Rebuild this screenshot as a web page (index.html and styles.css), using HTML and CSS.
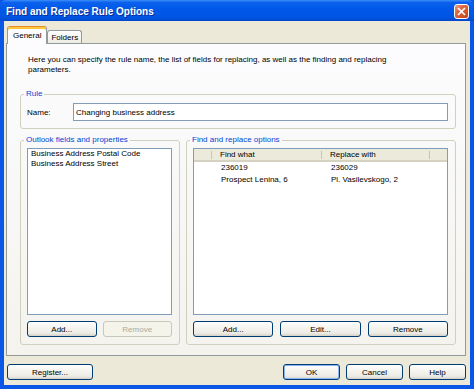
FILE: index.html
```html
<!DOCTYPE html>
<html lang="en">
<head>
  <meta charset="UTF-8" />
  <title>Find and Replace Rule Options</title>
  <link rel="stylesheet" href="styles.css">
</head>
<body>
  <div class="window">
    <div class="titlebar">
      <span class="title">Find and Replace Rule Options</span>
      <button class="close-btn" title="Close">
        <svg width="9" height="9" viewBox="0 0 9 9"><path d="M1 1L8 8M8 1L1 8" stroke="#fff" stroke-width="1.7"/></svg>
      </button>
    </div>

    <div class="frame">
      <div class="tabs">
        <div class="tab active">General</div>
        <div class="tab">Folders</div>
      </div>

      <div class="panel">
        <p class="intro">Here you can specify the rule name, the list of fields for replacing, as well as the finding and replacing parameters.</p>

        <fieldset class="group rule">
          <legend>Rule</legend>
          <div class="field-row">
            <label for="ruleName">Name:</label>
            <input id="ruleName" value="Changing business address">
          </div>
        </fieldset>

        <div class="columns">
          <fieldset class="group fields">
            <legend>Outlook fields and properties</legend>
            <div class="listbox">
              <div class="item">Business Address Postal Code</div>
              <div class="item">Business Address Street</div>
            </div>
            <div class="btn-row">
              <button class="btn">Add...</button>
              <button class="btn" disabled>Remove</button>
            </div>
          </fieldset>

          <fieldset class="group replace">
            <legend>Find and replace options</legend>
            <div class="listview">
              <div class="lv-head">
                <span></span><span>Find what</span><span>Replace with</span><span></span>
              </div>
              <div class="lv-row">
                <span></span><span>236019</span><span>236029</span><span></span>
              </div>
              <div class="lv-row">
                <span></span><span>Prospect Lenina, 6</span><span>Pl. Vasilevskogo, 2</span><span></span>
              </div>
            </div>
            <div class="btn-row wide">
              <button class="btn">Add...</button>
              <button class="btn">Edit...</button>
              <button class="btn">Remove</button>
            </div>
          </fieldset>
        </div>
      </div>

      <div class="dialog-buttons">
        <button class="btn register">Register...</button>
        <div class="right">
          <button class="btn default">OK</button>
          <button class="btn">Cancel</button>
          <button class="btn">Help</button>
        </div>
      </div>
    </div>
  </div>
</body>
</html>
```

FILE: styles.css
```css
* {
  box-sizing: border-box;
}

body {
  margin: 0;
  font-family: 'Liberation Sans', Arial, sans-serif;
  font-size: 8px;
  color: #000;
  background: #fff;
}

.window {
  width: 474px;
  height: 389px;
  background: #0a56e6;
  display: flex;
  flex-direction: column;
}

.titlebar {
  height: 21px;
  display: flex;
  align-items: center;
  justify-content: space-between;
  padding: 2px 5px 0 6px;
  background: linear-gradient(#3b8df8 0, #0b61ec 12%, #0058e8 45%, #0055e3 80%, #0047cc 100%);
  border-radius: 6px 6px 0 0;
}

.title {
  color: #fff;
  font-size: 10px;
  font-weight: bold;
  line-height: 12px;
  text-shadow: 1px 1px #0a2b9c;
}

.close-btn {
  width: 15px;
  height: 15px;
  padding: 0;
  border: 1px solid #fff;
  border-radius: 3px;
  background: linear-gradient(135deg, #f0a080 0, #e06a42 35%, #c94018 100%);
  display: flex;
  align-items: center;
  justify-content: center;
}

.frame {
  height: 364px;
  margin: 0 4px 4px;
  background: #ece9d8;
  display: flex;
  flex-direction: column;
}

/* tabs */
.tabs {
  height: 22px;
  display: flex;
  align-items: flex-end;
  padding-left: 3px;
}

.tab {
  height: 13px;
  padding: 1px 3px 0;
  line-height: 11px;
  border: 1px solid #919b9c;
  border-bottom: none;
  border-radius: 3px 3px 0 0;
  background: linear-gradient(#fff, #ecebe5);
}

.tab.active {
  position: relative;
  z-index: 1;
  height: 18px;
  margin-bottom: -1px;
  padding: 3px 5px 0;
  line-height: 12px;
  border-top-color: #e68b2c;
  box-shadow: inset 0 2px #ffc73c;
  background: #fcfcfe;
}

.panel {
  width: 460px;
  margin-left: 2px;
  padding: 0 9px 10px 13px;
  border: 1px solid #919b9c;
  background: linear-gradient(#fcfcfe, #f4f3ee);
}

.intro {
  max-width: 390px;
  margin: 11px 0 0 8px;
  line-height: 10px;
}

/* group boxes */
.group {
  margin: 0;
  min-width: 0;
  padding: 3px 7px 7px 6px;
  border: 1px solid #d0d0bf;
  border-radius: 3px;
}

.group legend {
  margin-left: -3px;
  padding: 0 2px;
  line-height: 10px;
  color: #0046d5;
}

.rule {
  margin-top: 14px;
  padding-top: 4px;
}

.field-row {
  display: flex;
  align-items: center;
}

.field-row label {
  width: 46px;
}

.field-row input {
  flex: 1;
  height: 18px;
  padding: 0 2px;
  border: 1px solid #7f9db9;
  font: inherit;
  background: #fff;
}

.columns {
  display: flex;
  gap: 6px;
  margin-top: 6px;
}

.fields {
  width: 160px;
}

.replace {
  flex: 1;
}

.listbox,
.listview {
  height: 167px;
  border: 1px solid #7f9db9;
  background: #fff;
}

.listbox {
  padding: 0 3px;
  line-height: 10px;
}

.lv-head,
.lv-row {
  display: grid;
  grid-template-columns: 18px 110px 108px 1fr;
}

.lv-head {
  height: 13px;
  padding-top: 1px;
  line-height: 10px;
  background: #ebeadb;
  border-bottom: 2px solid #d6d2c2;
}

.lv-head span {
  padding-left: 8px;
  background: linear-gradient(#c7c5b2, #c7c5b2) right 1px / 1px 8px no-repeat;
}

.lv-head span:last-child {
  background: none;
}

.lv-row {
  line-height: 12px;
}

.lv-row span {
  padding-left: 9px;
}

/* buttons */
.btn-row {
  display: flex;
  gap: 6px;
  margin-top: 6px;
}

.btn-row.wide {
  gap: 7px;
}

.btn-row .btn {
  flex: 1;
}

.btn {
  height: 16px;
  padding: 0;
  font: inherit;
  color: #000;
  border: 1px solid #003c74;
  border-radius: 3px;
  background: linear-gradient(#fff 0, #f5f4ef 40%, #ecebe6 80%, #d6d0c5 100%);
}

.btn:disabled {
  color: #aca899;
  border-color: #c9c7ba;
  background: #f5f4ea;
}

.btn.default {
  box-shadow: inset 0 0 0 1px #8cb4f2;
}

.dialog-buttons {
  display: flex;
  justify-content: space-between;
  margin: 8px 4px 0 3px;
}

.register {
  width: 86px;
}

.dialog-buttons .right {
  display: flex;
  gap: 6px;
}

.dialog-buttons .right .btn {
  width: 57px;
}
```
